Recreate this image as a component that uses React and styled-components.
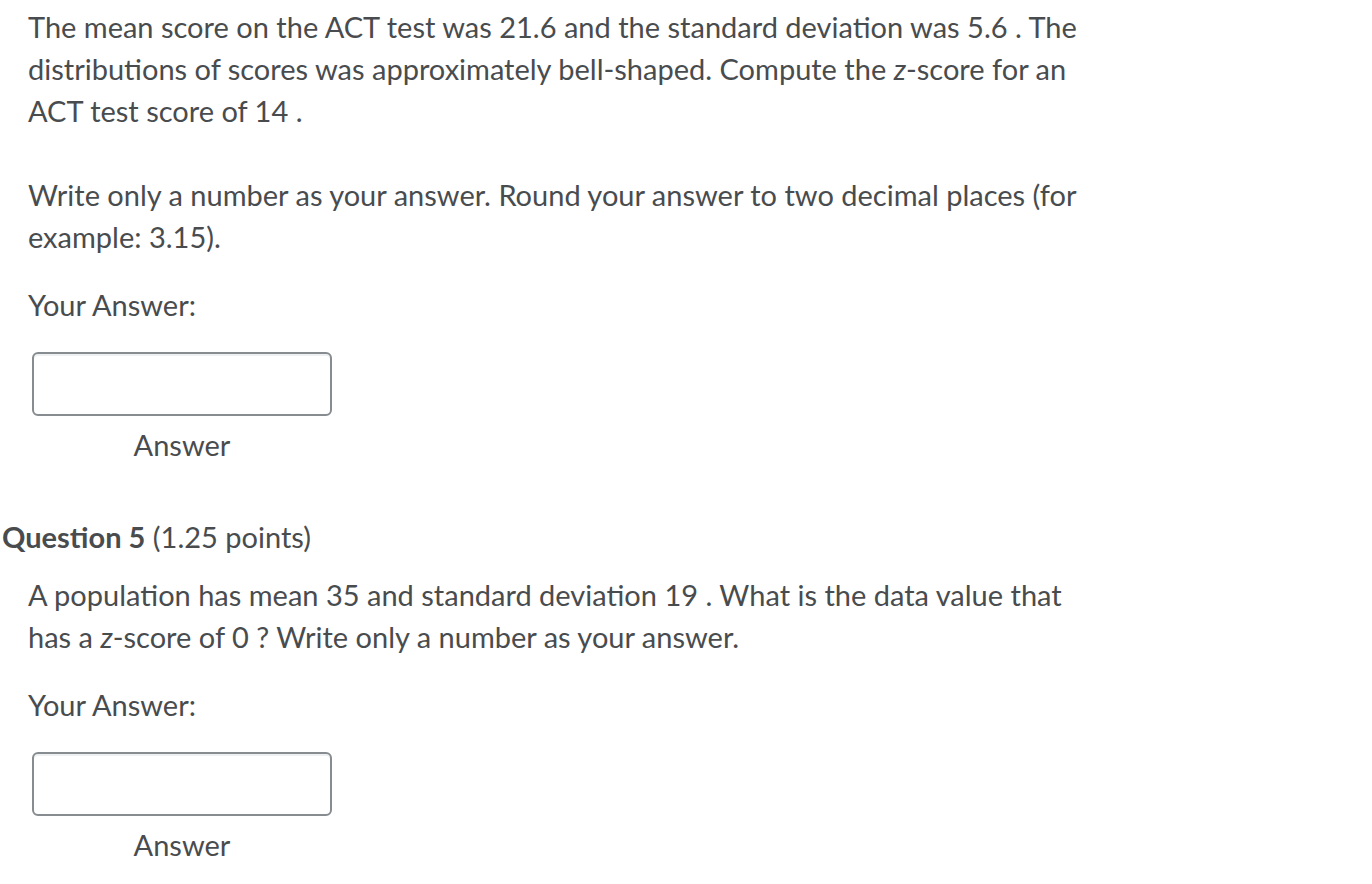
import React from 'react';
import styled, { createGlobalStyle } from 'styled-components';

const Global = createGlobalStyle`
  html, body {
    margin: 0;
    padding: 0;
    background: #ffffff;
  }
  body {
    font-family: Lato, "Noto Sans", sans-serif;
    color: #494c4e;
  }
`;

const Page = styled.div`
  padding: 6px 0 0 2px;
  width: 1300px;
`;

const Body = styled.div`
  padding-left: 26px;
`;

const Para = styled.p`
  margin: 0 0 ${p => p.gap || 0}px;
  font-size: 29px;
  line-height: 42px;
`;

const Label = styled.div`
  font-size: 29px;
  line-height: 42px;
  margin-bottom: 26px;
`;

const AnswerBox = styled.div`
  display: flex;
  flex-direction: column;
  align-items: center;
  width: 300px;
  margin-left: 4px;
`;

const Field = styled.input`
  box-sizing: border-box;
  width: 300px;
  height: 64px;
  border: 2px solid #868c8f;
  border-radius: 6px;
  box-shadow: inset 0 2px 0 #eef0f1;
  background: #fff;
  outline: none;
`;

const Caption = styled.div`
  font-size: 29px;
  line-height: 42px;
  margin-top: 8px;
`;

const Heading = styled.h2`
  margin: 50px 0 16px -26px;
  font-size: 29px;
  line-height: 42px;
  font-weight: 400;
  b { font-weight: 700; }
`;

function Answer() {
  return (
    <AnswerBox>
      <Field aria-label="Answer" />
      <Caption>Answer</Caption>
    </AnswerBox>
  );
}

export default function App() {
  return (
    <>
      <Global />
      <Page>
        <Body>
          <Para gap={42}>
            The mean score on the ACT test was 21.6 and the standard deviation was 5.6 . The<br />
            distributions of scores was approximately bell-shaped. Compute the <i>z</i>-score for an<br />
            ACT test score of 14 .
          </Para>
          <Para gap={26}>
            Write only a number as your answer. Round your answer to two decimal places (for<br />
            example: 3.15).
          </Para>
          <Label>Your Answer:</Label>
          <Answer />
          <Heading><b>Question 5</b> (1.25 points)</Heading>
          <Para gap={26}>
            A population has mean 35 and standard deviation 19 . What is the data value that<br />
            has a <i>z</i>-score of 0 ? Write only a number as your answer.
          </Para>
          <Label>Your Answer:</Label>
          <Answer />
        </Body>
      </Page>
    </>
  );
}
